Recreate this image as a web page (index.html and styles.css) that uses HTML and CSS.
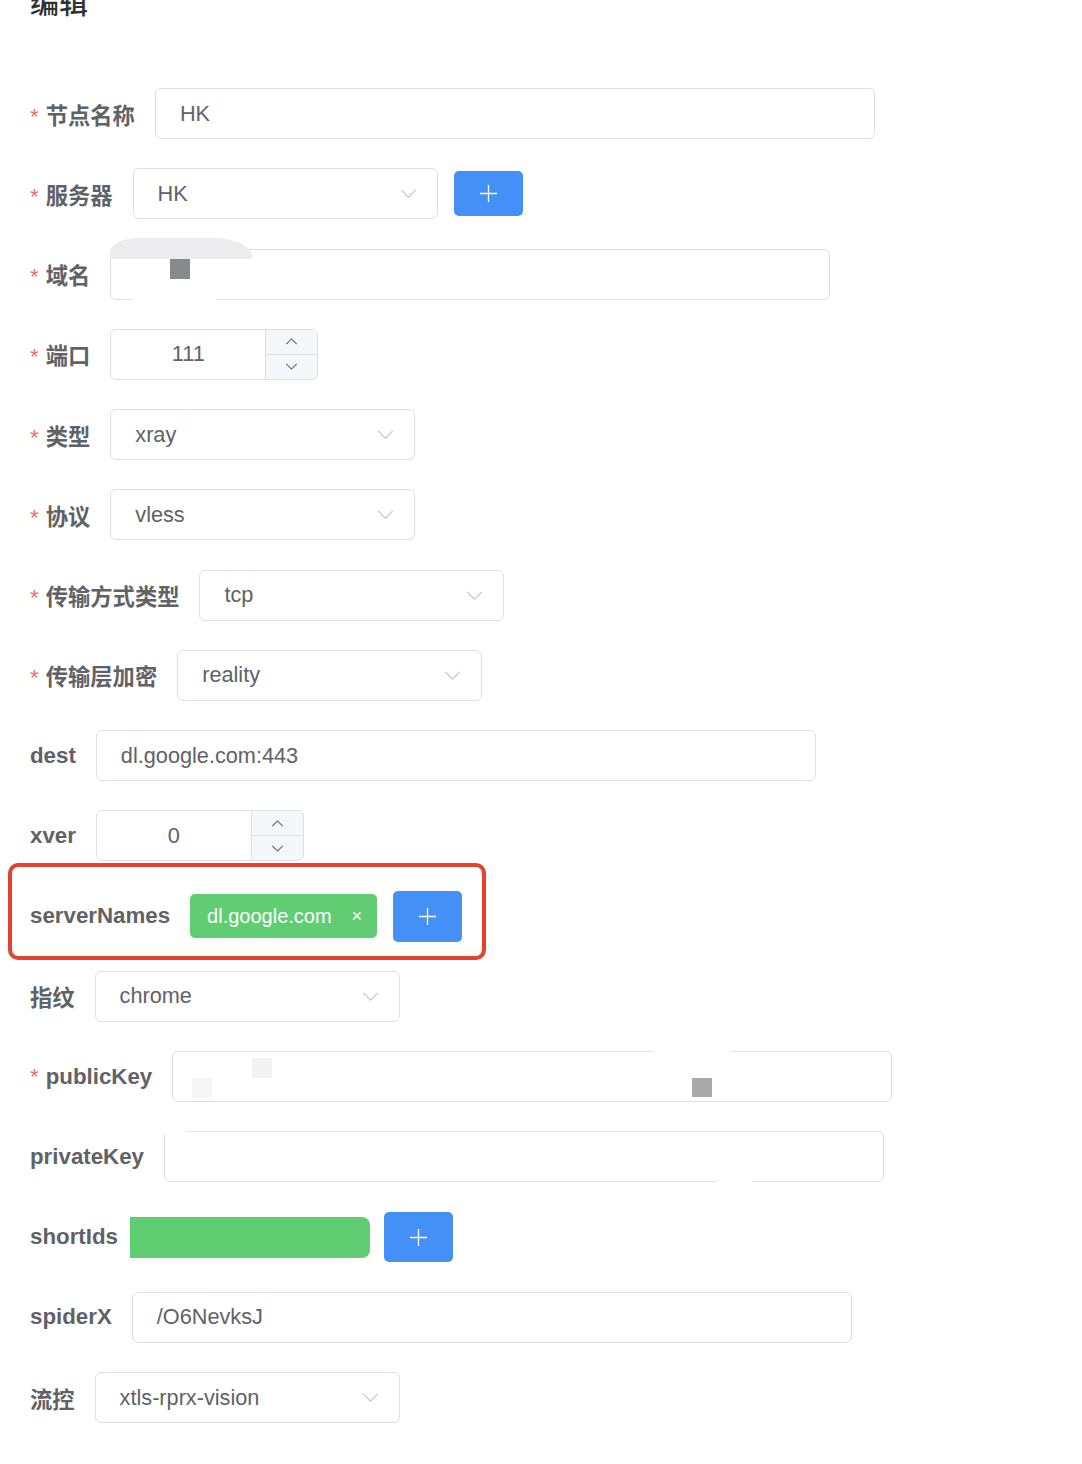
FILE: index.html
```html
<!DOCTYPE html>
<html lang="zh">
<head>
<meta charset="utf-8">
<title>编辑</title>
<link rel="stylesheet" href="styles.css">
</head>
<body>
<h1 class="title">编辑</h1>
<form class="form">
  <div class="row">
    <label class="label req">节点名称</label>
    <div class="input w-long"><span class="val">HK</span></div>
  </div>

  <div class="row">
    <label class="label req">服务器</label>
    <div class="input select w-sel"><span class="val">HK</span>
      <svg class="arrow" viewBox="0 0 18 10"><polyline points="1,1 9,9 17,1"/></svg></div>
    <button type="button" class="btn btn-sm"><svg class="plus" viewBox="0 0 20 20"><path d="M10 1v18M1 10h18"/></svg></button>
  </div>

  <div class="row">
    <label class="label req">域名</label>
    <div class="input w-long redacted-a"><span class="val"></span>
      <span class="blob"></span><span class="sq sq-dark"></span><span class="gap-bottom"></span></div>
  </div>

  <div class="row">
    <label class="label req">端口</label>
    <div class="input number"><span class="num-val">111</span>
      <span class="ctrls">
        <span class="ctrl"><svg viewBox="0 0 14 8"><polyline points="1,7 7,1 13,7"/></svg></span>
        <span class="ctrl"><svg viewBox="0 0 14 8"><polyline points="1,1 7,7 13,1"/></svg></span>
      </span></div>
  </div>

  <div class="row">
    <label class="label req">类型</label>
    <div class="input select w-sel"><span class="val">xray</span>
      <svg class="arrow" viewBox="0 0 18 10"><polyline points="1,1 9,9 17,1"/></svg></div>
  </div>

  <div class="row">
    <label class="label req">协议</label>
    <div class="input select w-sel"><span class="val">vless</span>
      <svg class="arrow" viewBox="0 0 18 10"><polyline points="1,1 9,9 17,1"/></svg></div>
  </div>

  <div class="row">
    <label class="label req">传输方式类型</label>
    <div class="input select w-sel"><span class="val">tcp</span>
      <svg class="arrow" viewBox="0 0 18 10"><polyline points="1,1 9,9 17,1"/></svg></div>
  </div>

  <div class="row">
    <label class="label req">传输层加密</label>
    <div class="input select w-sel"><span class="val">reality</span>
      <svg class="arrow" viewBox="0 0 18 10"><polyline points="1,1 9,9 17,1"/></svg></div>
  </div>

  <div class="row">
    <label class="label">dest</label>
    <div class="input w-long"><span class="val">dl.google.com:443</span></div>
  </div>

  <div class="row">
    <label class="label">xver</label>
    <div class="input number"><span class="num-val">0</span>
      <span class="ctrls">
        <span class="ctrl"><svg viewBox="0 0 14 8"><polyline points="1,7 7,1 13,7"/></svg></span>
        <span class="ctrl"><svg viewBox="0 0 14 8"><polyline points="1,1 7,7 13,1"/></svg></span>
      </span></div>
  </div>

  <div class="row row-hl">
    <span class="highlight"></span>
    <label class="label">serverNames</label>
    <span class="tag">dl.google.com<span class="tag-x">×</span></span>
    <button type="button" class="btn btn-tag"><svg class="plus" viewBox="0 0 20 20"><path d="M10 1v18M1 10h18"/></svg></button>
  </div>

  <div class="row">
    <label class="label">指纹</label>
    <div class="input select w-sel"><span class="val">chrome</span>
      <svg class="arrow" viewBox="0 0 18 10"><polyline points="1,1 9,9 17,1"/></svg></div>
  </div>

  <div class="row">
    <label class="label req">publicKey</label>
    <div class="input w-long redacted-b"><span class="val"></span>
      <span class="pk-gap-top"></span><span class="pk-sq1"></span><span class="pk-sq2"></span><span class="pk-sq3"></span></div>
  </div>

  <div class="row">
    <label class="label">privateKey</label>
    <div class="input w-long redacted-c"><span class="val"></span>
      <span class="prk-gap-top"></span><span class="prk-gap-bottom"></span></div>
  </div>

  <div class="row">
    <label class="label">shortIds</label>
    <span class="short-bar"></span>
    <button type="button" class="btn btn-short"><svg class="plus" viewBox="0 0 20 20"><path d="M10 1v18M1 10h18"/></svg></button>
  </div>

  <div class="row">
    <label class="label">spiderX</label>
    <div class="input w-long"><span class="val">/O6NevksJ</span></div>
  </div>

  <div class="row">
    <label class="label">流控</label>
    <div class="input select w-sel"><span class="val">xtls-rprx-vision</span>
      <svg class="arrow" viewBox="0 0 18 10"><polyline points="1,1 9,9 17,1"/></svg></div>
  </div>
</form>
</body>
</html>
```

FILE: styles.css
```css
* { box-sizing: border-box; }

html, body {
  margin: 0;
  background: #ffffff;
}

body {
  padding-left: 30px;
  font-family: "Liberation Sans", "Noto Sans CJK SC", sans-serif;
  color: #606266;
  overflow: hidden;
}

.title {
  margin: -11px 0 0 0;
  height: 30px;
  line-height: 30px;
  font-size: 29px;
  font-weight: 500;
  color: #303133;
}

.form {
  padding-top: 69px;
}

.row {
  position: relative;
  display: flex;
  align-items: center;
  height: 51px;
  margin-bottom: 29.25px;
}

.label {
  font-size: 22.3px;
  font-weight: 700;
  color: #606266;
  padding-right: 20px;
  white-space: nowrap;
}

.req::before {
  content: "*";
  color: #f56c6c;
  margin-right: 7px;
  font-weight: 400;
}

.input {
  position: relative;
  display: flex;
  align-items: center;
  height: 51px;
  border: 1px solid #dcdfe6;
  border-radius: 6px;
  background: #fff;
  padding: 0 24px;
  font-size: 21.7px;
  color: #606266;
}

.w-long { width: 720px; }
.w-sel { width: 305px; }

.select .val { flex: 1; }

.arrow {
  width: 17px;
  height: 9px;
  fill: none;
  stroke: #c0c4cc;
  stroke-width: 1.3;
  margin-right: -4px;
}

.number {
  width: 208px;
  padding: 0;
  overflow: hidden;
}

.num-val {
  flex: 1;
  text-align: center;
}

.ctrls {
  display: flex;
  flex-direction: column;
  width: 52px;
  height: 100%;
  border-left: 1px solid #dcdfe6;
  background: #f5f7fa;
}

.ctrl {
  flex: 1;
  display: flex;
  align-items: center;
  justify-content: center;
}

.ctrl:first-child { border-bottom: 1px solid #dcdfe6; }

.ctrl svg {
  width: 13px;
  height: 7px;
  fill: none;
  stroke: #606266;
  stroke-width: 1.2;
}

.btn {
  display: flex;
  align-items: center;
  justify-content: center;
  width: 69px;
  height: 51px;
  border: none;
  border-radius: 5px;
  background: #4590f6;
  padding: 0;
}

.btn-sm { height: 45px; margin-left: 16px; }
.btn-tag { margin-left: 16px; }
.btn-short { margin-left: 14px; height: 50px; }

.plus {
  width: 19px;
  height: 19px;
  fill: none;
  stroke: #ffffff;
  stroke-width: 1.4;
}

/* serverNames highlight */
.highlight {
  position: absolute;
  left: -22px;
  top: -28px;
  width: 478px;
  height: 97px;
  border: 4px solid #e5412d;
  border-radius: 10px;
  pointer-events: none;
}

.tag {
  display: flex;
  align-items: center;
  height: 44px;
  width: 187px;
  padding: 0 0 0 17px;
  border-radius: 5px;
  background: #61cd72;
  color: #ffffff;
  font-size: 20px;
}

.tag-x {
  margin-left: auto;
  margin-right: 15px;
  font-size: 18px;
}

/* redaction marks left over in the screenshot */
.redacted-a .blob {
  position: absolute;
  left: -1px;
  top: -12px;
  width: 142px;
  height: 21px;
  background: #ececef;
  border-radius: 30px 40px 0 0 / 14px 18px 0 0;
}

.redacted-a .sq-dark {
  position: absolute;
  left: 59px;
  top: 9px;
  width: 20px;
  height: 20px;
  background: #88898d;
}

.redacted-a .gap-bottom {
  position: absolute;
  left: 20px;
  bottom: -2px;
  width: 85px;
  height: 4px;
  background: #ffffff;
}

.redacted-b .pk-gap-top {
  position: absolute;
  left: 480px;
  top: -2px;
  width: 78px;
  height: 4px;
  background: #fff;
}

.redacted-b .pk-sq1 {
  position: absolute;
  left: 79px;
  top: 6px;
  width: 20px;
  height: 20px;
  background: #f2f2f2;
}

.redacted-b .pk-sq2 {
  position: absolute;
  left: 19px;
  top: 26px;
  width: 20px;
  height: 20px;
  background: #f6f6f6;
}

.redacted-b .pk-sq3 {
  position: absolute;
  left: 519px;
  top: 26px;
  width: 20px;
  height: 19px;
  background: #a9a9a9;
}

.redacted-c .prk-gap-top {
  position: absolute;
  left: -2px;
  top: -2px;
  width: 23px;
  height: 4px;
  background: #fff;
}

.redacted-c .prk-gap-bottom {
  position: absolute;
  left: 551px;
  bottom: -2px;
  width: 36px;
  height: 4px;
  background: #fff;
}

.short-bar {
  display: block;
  width: 240px;
  height: 41px;
  margin-left: -8px;
  background: #61cd72;
  border-radius: 0 8px 8px 0;
}
```
